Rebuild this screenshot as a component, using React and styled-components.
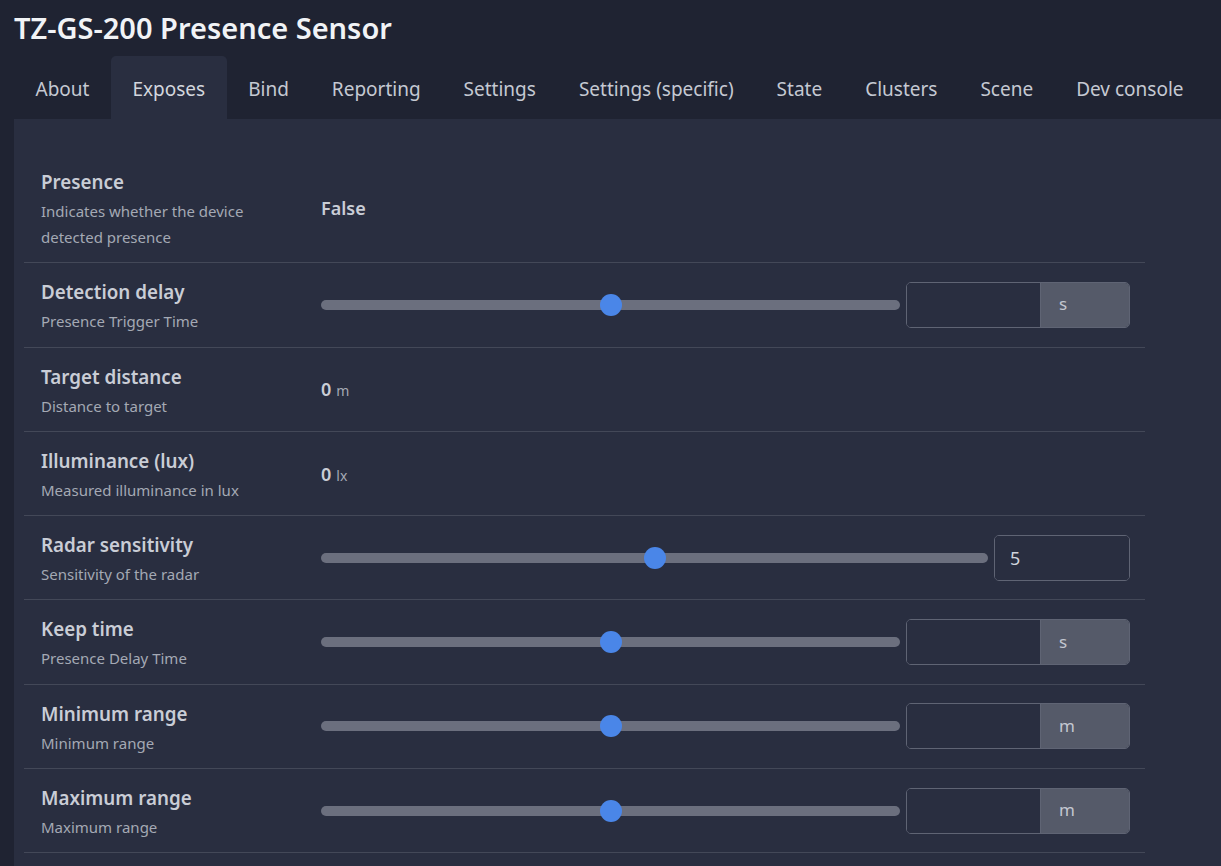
import React from "react";
import styled, { createGlobalStyle } from "styled-components";

const GlobalStyle = createGlobalStyle`
  html, body {
    margin: 0;
    padding: 0;
    background: #1f2332;
  }
  body {
    font-family: "Noto Sans", "Open Sans", sans-serif;
    color: #c9cdd6;
    overflow: hidden;
  }
  * { box-sizing: border-box; }
`;

const Page = styled.div`
  width: 1221px;
  height: 866px;
  display: flex;
  flex-direction: column;
  background: #1f2332;
`;

const Title = styled.h1`
  margin: 0;
  height: 56px;
  padding: 8px 0 0 14px;
  font-size: 29px;
  font-weight: 600;
  line-height: 40px;
  color: #f1f3f6;
`;

const TabBar = styled.nav`
  display: flex;
  height: 63px;
  padding-left: 14px;
`;

const Tab = styled.div`
  display: flex;
  align-items: center;
  padding: 2px 21.5px 0 21.5px;
  font-size: 19px;
  color: ${(p) => (p.$active ? "#d3d6dd" : "#c5c9d2")};
  background: ${(p) => (p.$active ? "#292e40" : "transparent")};
  border-radius: 5px 5px 0 0;
  white-space: nowrap;
`;

const Panel = styled.main`
  flex: 1;
  margin-left: 14px;
  background: #292e40;
  padding: 34px 76px 0 10px;
`;

const List = styled.div`
  display: flex;
  flex-direction: column;
`;

const Row = styled.div`
  display: grid;
  grid-template-columns: 280px 1fr;
  border-bottom: 1px solid #434858;
`;

const LabelCell = styled.div`
  padding: 15px 17px 12.3px 17px;
`;

const Name = styled.div`
  font-size: 18.8px;
  font-weight: 600;
  line-height: 28px;
  color: #c9cdd6;
`;

const Description = styled.div`
  margin-top: 2px;
  font-size: 15px;
  line-height: 26px;
  color: #a4a9b4;
`;

const ValueCell = styled.div`
  display: flex;
  align-items: center;
  padding: 0 15px 0 17px;
`;

const Reading = styled.span`
  font-size: 18px;
  font-weight: 600;
  color: #c9cdd6;
`;

const Unit = styled.span`
  margin-left: 5px;
  font-size: 14px;
  font-weight: 400;
  color: #a4a9b4;
`;

const SliderWrap = styled.div`
  display: flex;
  align-items: center;
  gap: 6px;
  width: 100%;
`;

const Range = styled.input.attrs({ type: "range" })`
  flex: 1;
  min-width: 0;
  margin: 0;
  height: 22px;
  background: transparent;
  -webkit-appearance: none;
  appearance: none;

  &::-webkit-slider-runnable-track {
    height: 10px;
    border-radius: 5px;
    background: #6b6f7e;
  }
  &::-webkit-slider-thumb {
    -webkit-appearance: none;
    width: 22px;
    height: 22px;
    margin-top: -6px;
    border: none;
    border-radius: 50%;
    background: #4a86e8;
  }
  &::-moz-range-track {
    height: 10px;
    border-radius: 5px;
    background: #6b6f7e;
  }
  &::-moz-range-thumb {
    width: 22px;
    height: 22px;
    border: none;
    border-radius: 50%;
    background: #4a86e8;
  }
`;

const InputGroup = styled.div`
  display: flex;
  width: ${(p) => p.$width}px;
  height: 46px;
  border: 1px solid #5f6474;
  border-radius: 5px;
  overflow: hidden;
`;

const Field = styled.input`
  width: ${(p) => (p.$full ? "100%" : "133px")};
  height: 100%;
  margin: 0;
  padding: 0 15px;
  border: none;
  outline: none;
  background: #292e40;
  font-family: inherit;
  font-size: 18px;
  color: #d0d4dc;
`;

const Addon = styled.span`
  flex: 1;
  display: flex;
  align-items: center;
  padding: 0 0 2px 18px;
  background: #555a69;
  border-left: 1px solid #5f6474;
  font-size: 17px;
  color: #c3c7d0;
`;

const tabs = [
  "About",
  "Exposes",
  "Bind",
  "Reporting",
  "Settings",
  "Settings (specific)",
  "State",
  "Clusters",
  "Scene",
  "Dev console",
];

const features = [
  {
    name: "Presence",
    description: "Indicates whether the device detected presence",
    kind: "text",
    value: "False",
  },
  { name: "Detection delay", description: "Presence Trigger Time", kind: "slider", unit: "s", value: 50 },
  { name: "Target distance", description: "Distance to target", kind: "reading", value: "0", unit: "m" },
  { name: "Illuminance (lux)", description: "Measured illuminance in lux", kind: "reading", value: "0", unit: "lx" },
  { name: "Radar sensitivity", description: "Sensitivity of the radar", kind: "number", value: 50, field: "5" },
  { name: "Keep time", description: "Presence Delay Time", kind: "slider", unit: "s", value: 50 },
  { name: "Minimum range", description: "Minimum range", kind: "slider", unit: "m", value: 50 },
  { name: "Maximum range", description: "Maximum range", kind: "slider", unit: "m", value: 50 },
];

function FeatureValue({ f }) {
  if (f.kind === "text") return <Reading>{f.value}</Reading>;
  if (f.kind === "reading")
    return (
      <Reading>
        {f.value}
        <Unit>{f.unit}</Unit>
      </Reading>
    );
  if (f.kind === "number")
    return (
      <SliderWrap>
        <Range min={0} max={100} defaultValue={f.value} />
        <InputGroup $width={136}>
          <Field $full defaultValue={f.field} />
        </InputGroup>
      </SliderWrap>
    );
  return (
    <SliderWrap>
      <Range min={0} max={100} defaultValue={f.value} />
      <InputGroup $width={224}>
        <Field defaultValue="" />
        <Addon>{f.unit}</Addon>
      </InputGroup>
    </SliderWrap>
  );
}

export default function App() {
  return (
    <Page>
      <GlobalStyle />
      <Title>TZ-GS-200 Presence Sensor</Title>
      <TabBar>
        {tabs.map((t) => (
          <Tab key={t} $active={t === "Exposes"}>
            {t}
          </Tab>
        ))}
      </TabBar>
      <Panel>
        <List>
          {features.map((f) => (
            <Row key={f.name}>
              <LabelCell>
                <Name>{f.name}</Name>
                <Description>{f.description}</Description>
              </LabelCell>
              <ValueCell>
                <FeatureValue f={f} />
              </ValueCell>
            </Row>
          ))}
        </List>
      </Panel>
    </Page>
  );
}
